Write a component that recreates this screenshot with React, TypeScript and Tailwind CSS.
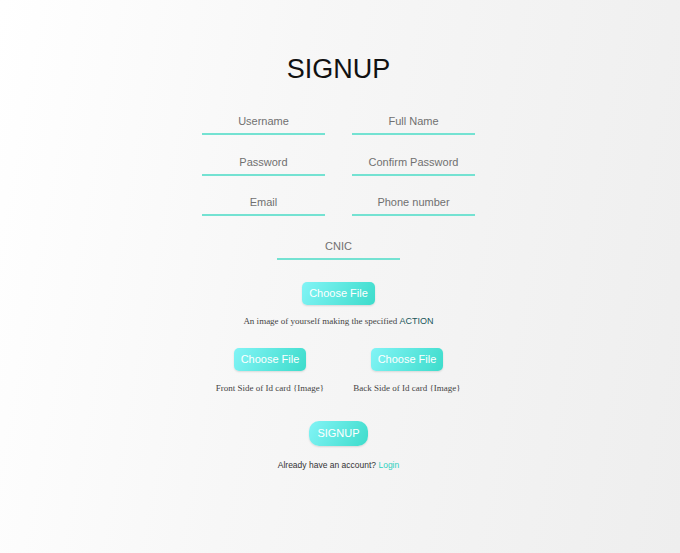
import React from "react";

const sans = { fontFamily: '"Liberation Sans", Arial, sans-serif' };
const serif = { fontFamily: '"Liberation Serif", "Times New Roman", serif' };

function Field({ placeholder, type = "text", tall = false }: { placeholder: string; type?: string; tall?: boolean }) {
  return (
    <input
      type={type}
      placeholder={placeholder}
      className={
        tall
          ? "w-[123px] h-[28px] pt-[1px] bg-transparent border-0 border-b-2 border-solid border-b-[#74e2d2] text-center text-[11px] text-[#333] placeholder:text-[#707070] outline-none"
          : "w-[123px] h-[26px] bg-transparent border-0 border-b-2 border-solid border-b-[#74e2d2] text-center text-[11px] text-[#333] placeholder:text-[#707070] outline-none"
      }
      style={sans}
    />
  );
}

function FileButton() {
  return (
    <label
      className="inline-flex items-center justify-center h-[23px] px-[7px] rounded-[5px] bg-[linear-gradient(120deg,#82f4f6,#3ddccb)] text-white text-[11px] leading-none shadow-[0_1px_2px_rgba(0,0,0,0.12)] cursor-pointer"
      style={sans}
    >
      Choose File
      <input type="file" className="hidden" />
    </label>
  );
}

export default function App() {
  return (
    <div className="w-full h-[553px] bg-[linear-gradient(100deg,#ffffff_0%,#f7f7f7_40%,#eeeeee_100%)] overflow-hidden">
      <div className="w-[677px] flex flex-col items-center">
        <h1 className="mt-[56px] text-[27px] leading-[27px] text-[#111] font-normal" style={sans}>
          SIGNUP
        </h1>

        <div className="mt-[26px] flex gap-x-[27px]">
          <Field placeholder="Username" />
          <Field placeholder="Full Name" />
        </div>
        <div className="mt-[15px] flex gap-x-[27px]">
          <Field placeholder="Password" type="password" />
          <Field placeholder="Confirm Password" type="password" />
        </div>
        <div className="mt-[14px] flex gap-x-[27px]">
          <Field placeholder="Email" type="email" />
          <Field placeholder="Phone number" />
        </div>

        <div className="mt-[16px] flex">
          <Field placeholder="CNIC" tall />
        </div>

        <div className="mt-[19px]">
          <FileButton />
        </div>
        <p className="mt-[11px] text-[9px] leading-[11px] text-[#444]" style={serif}>
          An image of yourself making the specified{" "}
          <span className="text-[#17555a]" style={sans}>
            ACTION
          </span>
        </p>

        <div className="mt-[21px] grid grid-cols-[137px_137px]">
          <div className="flex flex-col items-center">
            <FileButton />
            <p className="mt-[12px] text-[9px] leading-[11px] text-[#444] whitespace-nowrap" style={serif}>
              Front Side of Id card {"{Image}"}
            </p>
          </div>
          <div className="flex flex-col items-center">
            <FileButton />
            <p className="mt-[12px] text-[9px] leading-[11px] text-[#444] whitespace-nowrap" style={serif}>
              Back Side of Id card {"{Image}"}
            </p>
          </div>
        </div>

        <button
          className="mt-[27px] h-[25px] w-[59px] rounded-[10px] bg-[linear-gradient(120deg,#82f4f6,#3ddccb)] text-white text-[11px] leading-none shadow-[0_1px_2px_rgba(0,0,0,0.12)]"
          style={sans}
        >
          SIGNUP
        </button>

        <p className="mt-[14px] text-[8.5px] leading-[10px] text-[#333]" style={sans}>
          Already have an account?{" "}
          <a href="#" className="text-[#2fd0bf]">
            Login
          </a>
        </p>
      </div>
    </div>
  );
}
